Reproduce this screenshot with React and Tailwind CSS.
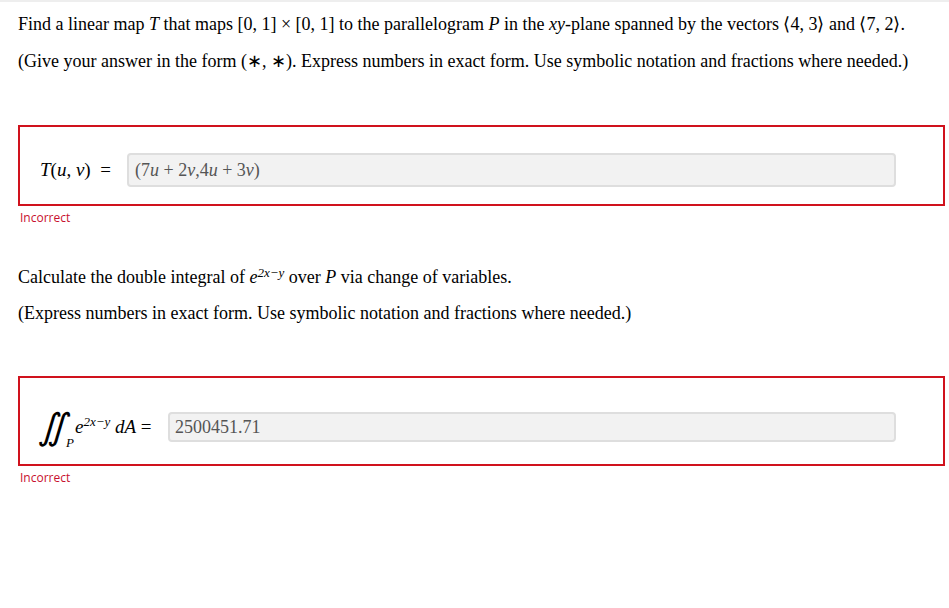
export default function App() {
  const serif = { fontFamily: '"Liberation Serif", "Times New Roman", serif' }
  const sans = { fontFamily: '"Open Sans", sans-serif' }
  return (
    <div className="w-[949px] h-[608px] bg-white border-t-2 border-[#eeeeee] text-black" style={serif}>
      <div className="pl-[18px] pr-[4px]">
        <p className="text-[18px] leading-[21px] pt-[12px]">
          Find a linear map <i>T</i> that maps [0, 1] × [0, 1] to the parallelogram <i>P</i> in the <i>xy</i>-plane spanned by the vectors ⟨4, 3⟩ and ⟨7, 2⟩.
        </p>
        <p className="text-[18px] leading-[21px] mt-[16px]">
          (Give your answer in the form (∗, ∗). Express numbers in exact form. Use symbolic notation and fractions where needed.)
        </p>

        {/* answer 1 */}
        <div className="mt-[53px] h-[81px] border-2 border-[#d0121d] pt-[26px] pl-[20px] pr-[47px]">
          <div className="flex items-center h-[34px]">
            <span className="text-[19px] w-[87px] shrink-0 whitespace-nowrap">
              <i>T</i>(<i>u</i>,&nbsp;<i>v</i>)&nbsp;&nbsp;=
            </span>
            <div className="flex-1 h-[34px] rounded-[4px] border-2 border-[#dedede] bg-[#f2f2f2] flex items-center px-[6px] text-[18px] text-[#555555] whitespace-nowrap">
              (7<i>u</i>&nbsp;+&nbsp;2<i>v</i>,4<i>u</i>&nbsp;+&nbsp;3<i>v</i>)
            </div>
          </div>
        </div>
        <p className="text-[12px] leading-[16px] text-[#c8102e] pl-[2px] mt-[4px]" style={sans}>Incorrect</p>

        <p className="text-[18px] leading-[21px] mt-[41px]">
          Calculate the double integral of <i>e</i><sup className="text-[13px]"><i>2x−y</i></sup> over <i>P</i> via change of variables.
        </p>
        <p className="text-[18px] leading-[21px] mt-[15px]">
          (Express numbers in exact form. Use symbolic notation and fractions where needed.)
        </p>

        {/* answer 2 */}
        <div className="mt-[52px] h-[90px] border-2 border-[#d0121d] pt-[34px] pl-[18px] pr-[47px]">
          <div className="flex items-center h-[30px]">
            <span className="w-[130px] shrink-0 flex items-center text-[19px] whitespace-nowrap">
              <span className="text-[36px] italic leading-none">∬</span>
              <span className="text-[13px] leading-none italic self-end mb-[-4px]">P</span>
              <span className="ml-[1px]"><i>e</i><sup className="text-[13px]"><i>2x−y</i></sup>&nbsp;<i>dA</i>&nbsp;=</span>
            </span>
            <div className="flex-1 h-[30px] rounded-[4px] border-2 border-[#dedede] bg-[#f2f2f2] flex items-center px-[5px] text-[18px] text-[#555555]">
              2500451.71
            </div>
          </div>
        </div>
        <p className="text-[12px] leading-[16px] text-[#c8102e] pl-[2px] mt-[4px]" style={sans}>Incorrect</p>
      </div>
    </div>
  )
}
